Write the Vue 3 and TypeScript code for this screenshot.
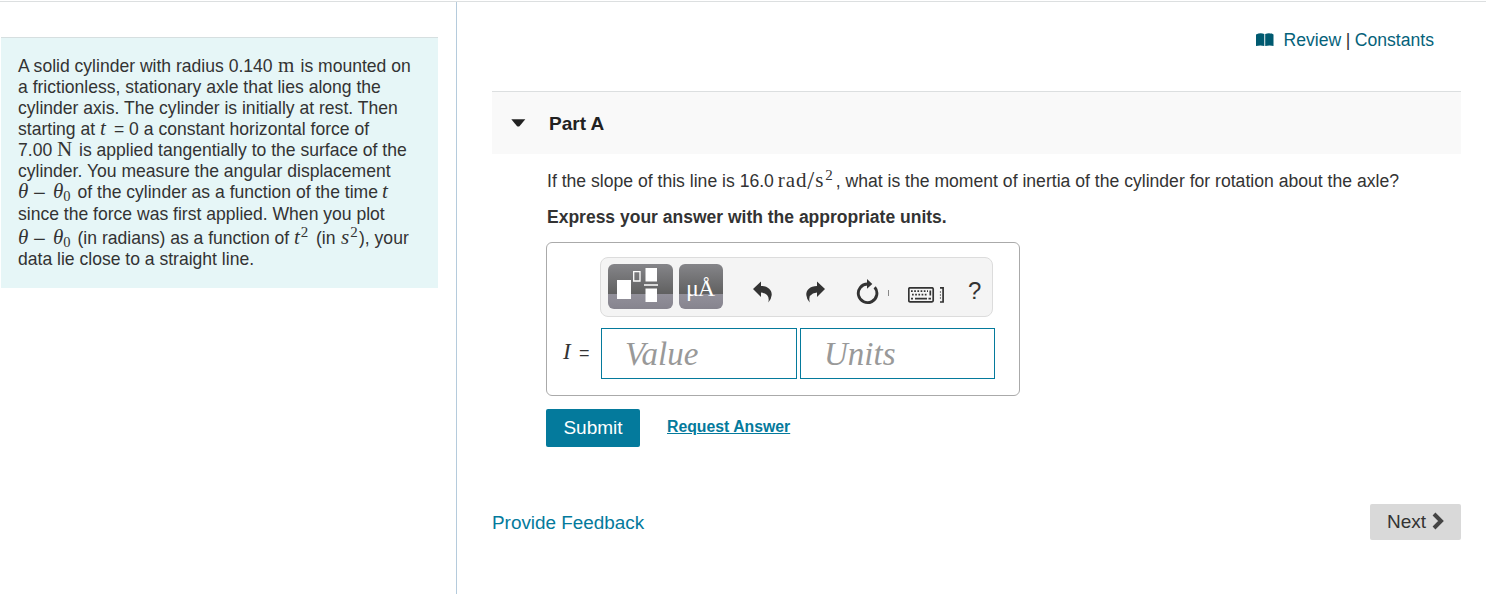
<template>
  <div class="page">
    <aside class="sidebar">
      <div class="problem">
        <div v-for="(line, i) in lines" :key="i" class="line" :class="{ tall: i === 7, taller: i === 8 }">
          <span v-for="(seg, j) in line" :key="j" :class="seg.kind" :style="seg.width ? { width: seg.width + 'px' } : {}">{{ seg.text }}<sup v-if="seg.sup">{{ seg.sup }}</sup><sub v-if="seg.sub">{{ seg.sub }}</sub></span>
        </div>
      </div>
    </aside>

    <main class="content">
      <nav class="resources">
        <svg class="book" width="18" height="14" viewBox="0 0 18 14">
          <path d="M0 1.4Q4.5-.6 8.3 1V13Q4.5 11.8 0 13ZM9.2 1Q13.5-.6 17.5 1.4V13Q13.5 11.8 9.2 13Z" fill="#005a70" />
        </svg>
        <a class="review" href="#">Review</a>
        <span class="pipe">|</span>
        <a class="constants" href="#">Constants</a>
      </nav>

      <header class="part-header" @click="open = !open">
        <svg class="caret" width="15" height="8" viewBox="0 0 15 8"><path d="M.3.3H14.3L8.7 6.9Q7.3 8.2 5.9 6.9Z" fill="#222" /></svg>
        <h2>Part A</h2>
      </header>

      <section v-show="open" class="part-body">
        <p class="question"><span class="q-start">If the slope of this line is 16.0 </span><span class="math unit">rad<i class="slash">/</i>s<sup>2</sup></span><span class="q-end">, what is the moment of inertia of the cylinder for rotation about the axle?</span></p>
        <p class="instruction">Express your answer with the appropriate units.</p>

        <div class="answer-box">
          <div class="toolbar">
            <button class="tool templates" title="Templates">
              <svg width="65" height="45" viewBox="0 0 65 45">
                <path d="M9 16h14v19H9zM37.500 4h11.500v13.500H37.500zM37.500 24.500h11.500v13.500H37.500z" fill="#fff" />
                <path d="M36 21h14" stroke="#fff" stroke-width="1.500" />
                <path d="M25.700 7.700h6.300v9.300h-6.300z" fill="none" stroke="#fff" stroke-width="1.300" />
              </svg>
            </button>
            <button class="tool symbols" title="Symbols">μÅ</button>
            <svg class="undo" width="20" height="22" viewBox="0 0 20 22"><path d="M0 8L8 .5V5C15 5 19 9 18.700 14Q18.400 18 15.300 21.500Q17.500 12.500 8 11.500V16Z" fill="#333" /></svg>
            <svg class="redo" width="20" height="22" viewBox="0 0 20 22"><path d="M19 8L11 .5V5C4 5 0 9 .3 14Q.6 18 3.700 21.500Q1.500 12.500 11 11.500V16Z" fill="#333" /></svg>
            <svg class="reset" width="23" height="26" viewBox="0 0 23 26"><path d="M11.500 5A9.300 9.300 0 1 0 18.700 8.300" fill="none" stroke="#333" stroke-width="2.900" /><path d="M11 0L16.300 4.900L11 9.800Z" fill="#333" /></svg>
            <i class="tick"></i>
            <svg class="keyboard" width="37" height="16" viewBox="0 0 37 16">
              <rect x=".8" y=".8" width="24.400" height="14" rx="1.200" fill="none" stroke="#333" stroke-width="1.700" />
              <path d="M3 4.200H20M4 7.700H20" stroke="#333" stroke-width="1.700" stroke-dasharray="1.700 1.500" />
              <path d="M3 11.700H5M7 11.700H19M20.500 11.700H23M22.300 3.400V8.500" stroke="#333" stroke-width="1.700" />
              <path d="M32 .9H35.100V15H32" fill="none" stroke="#333" stroke-width="1.700" />
              <path d="M32.400 4V12.500" stroke="#777" stroke-width="1" stroke-dasharray="2 1" />
            </svg>
            <span class="help">?</span>
          </div>
          <div class="fields">
            <label><i>I</i><span>=</span></label>
            <input v-model="value" placeholder="Value" />
            <input v-model="units" placeholder="Units" />
          </div>
        </div>

        <div class="actions">
          <button class="submit">Submit</button>
          <a class="request" href="#">Request Answer</a>
        </div>
      </section>

      <footer class="footer">
        <a class="feedback" href="#">Provide Feedback</a>
        <button class="next"><span>Next</span>
          <svg width="13" height="18" viewBox="0 0 13 18"><path d="M2 2L9 9L2 16" fill="none" stroke="#444" stroke-width="4" /></svg>
        </button>
      </footer>
    </main>
  </div>
</template>

<script setup lang="ts">
import { ref } from 'vue';

interface Segment {
  text: string;
  kind?: string;
  width?: number;
  sup?: string;
  sub?: string;
}

const open = ref(true);
const value = ref('');
const units = ref('');

const lines: Segment[][] = [
  [{ text: 'A solid cylinder with radius 0.140', width: 260 }, { text: 'm', kind: 'math', width: 22.5 }, { text: 'is mounted on' }],
  [{ text: 'a frictionless, stationary axle that lies along the' }],
  [{ text: 'cylinder axis. The cylinder is initially at rest. Then' }],
  [{ text: 'starting at', width: 82 }, { text: 't', kind: 'math var', width: 14 }, { text: '= 0 a constant horizontal force of' }],
  [{ text: '7.00', width: 39 }, { text: 'N', kind: 'math', width: 22 }, { text: 'is applied tangentially to the surface of the' }],
  [{ text: 'cylinder. You measure the angular displacement' }],
  [
    { text: 'θ', kind: 'math var', width: 14 }, { text: '−', kind: 'math minus', width: 21 }, { text: 'θ', kind: 'math var', width: 24.5, sub: '0' },
    { text: 'of the cylinder as a function of the time', width: 304.5 }, { text: 't', kind: 'math var' },
  ],
  [{ text: 'since the force was first applied. When you plot' }],
  [
    { text: 'θ', kind: 'math var', width: 14 }, { text: '−', kind: 'math minus', width: 21 }, { text: 'θ', kind: 'math var', width: 24.5, sub: '0' },
    { text: '(in radians) as a function of', width: 216.5 }, { text: 't', kind: 'math var', width: 22, sup: '2' },
    { text: '(in', width: 25 }, { text: 's', kind: 'math var', width: 18, sup: '2' }, { text: '), your' },
  ],
  [{ text: 'data lie close to a straight line.' }],
];
</script>

<style>
body {
  background: #fff;
}
</style>

<style scoped>
* {
  box-sizing: border-box;
}

.page {
  display: flex;
  height: 593px;
  margin-top: 1px;
  border-top: 1px solid #dcdfe0;
  font-family: "Liberation Sans", Arial, sans-serif;
  font-size: 17.6px;
  color: #333;
  overflow: hidden;
}

a {
  color: #047a9c;
  text-decoration: none;
}

p,
h2 {
  margin: 0;
}

button {
  font-family: inherit;
  border: 0;
  padding: 0;
}

.sidebar {
  width: 457px;
  flex: none;
  border-right: 1px solid #b5cbdc;
  padding: 35px 18px 0 1px;
}

.problem {
  height: 251px;
  padding: 18px 0 0 17px;
  background: #e6f6f7;
  border-top: 1px solid #d6dfe0;
  font-size: 17.56px;
}

.line {
  display: flex;
  align-items: baseline;
  height: 21px;
  line-height: 21px;
  white-space: pre;
}

.line.tall {
  height: 22px;
  padding-top: 1px;
}

.line.taller {
  height: 24px;
  padding-top: 3px;
}

.line > span {
  flex: none;
}

.math,
.line > .math {
  font-family: "Liberation Serif", "Times New Roman", serif;
  font-size: 21px;
  line-height: 12px;
}

.var {
  font-style: italic;
}

.line > .minus {
  align-self: center;
  padding: 3px 0 0 1px;
  font-size: 23px;
  line-height: 14px;
}

sup,
sub {
  font-size: 15px;
  font-style: normal;
  line-height: 0;
}

sup {
  vertical-align: 7px;
  margin-left: 1px;
}

sub {
  font-size: 14.5px;
  vertical-align: -3px;
}

.content {
  flex: 1;
  padding: 0 25px 0 35px;
}

.resources {
  display: flex;
  align-items: center;
  height: 76px;
  margin-bottom: 13px;
  padding-right: 27px;
  justify-content: flex-end;
}

.resources a {
  color: #05627a;
}

.book {
  margin-right: 10px;
}

.pipe {
  margin: 0 4.5px;
}

.part-header {
  display: flex;
  align-items: center;
  height: 63px;
  padding-left: 18.5px;
  border-top: 1px solid #dcdfe0;
  background: #f9f9f9;
}

.part-header h2 {
  margin: 1px 0 0 23.5px;
  font-size: 19px;
  color: #222;
}

.part-body {
  padding-left: 54px;
}

.question {
  height: 54px;
  line-height: 54px;
  padding-left: 1px;
  white-space: pre;
}

.q-start {
  margin-right: -1px;
}

.unit {
  margin-right: 2px;
  letter-spacing: 0.9px;
}

.slash {
  font-size: 25px;
  font-style: normal;
  vertical-align: -2px;
  line-height: 0;
}

.instruction {
  height: 34px;
  line-height: 18px;
  padding-left: 1px;
  font-size: 17.5px;
  font-weight: bold;
}

.answer-box {
  width: 474px;
  height: 154px;
  padding: 14px 24px 0 15px;
  border: 1px solid #aaa;
  border-radius: 6px;
}

.toolbar {
  display: flex;
  width: 393px;
  height: 60px;
  margin-left: 38px;
  padding: 6px 7px;
  background: #f4f4f4;
  border: 1px solid #dcdcdc;
  border-radius: 8px;
}

.tool {
  height: 45px;
  border-radius: 6px;
  color: #fff;
  background: linear-gradient(#858589 0, #606060 67%, #92909a 67%, #86848e 100%);
}

.templates {
  width: 65px;
}

.templates svg {
  display: block;
}

.symbols {
  width: 44px;
  margin-left: 6px;
  padding: 3px 2px 0 0;
  font: 24px "Liberation Serif", serif;
  letter-spacing: -1px;
}

.undo {
  margin: 17px 0 0 30px;
}

.redo {
  margin: 17px 0 0 33px;
}

.reset {
  margin: 15px 0 0 30px;
}

.tick {
  width: 1px;
  height: 6px;
  margin: 26px 0 0 9px;
  background: #888;
}

.keyboard {
  margin: 23px 0 0 19px;
}

.help {
  margin: 13px 0 0 23px;
  font-size: 24px;
  line-height: 28px;
}

.fields {
  display: flex;
  align-items: center;
  margin-top: 11px;
}

.fields label {
  display: flex;
  align-items: baseline;
  width: 39px;
  padding: 0 0 4px 1px;
  font-size: 18px;
}

.fields label i {
  width: 16px;
  font: italic 23px "Liberation Serif", serif;
}

.fields input {
  width: 196px;
  height: 51px;
  padding: 1px 23px 0;
  border: 1px solid #047a9c;
  border-radius: 0;
  font: italic 33px "Liberation Serif", serif;
  outline: none;
}

.fields input + input {
  width: 195px;
  margin-left: 3px;
}

.fields input::placeholder {
  color: #999;
  opacity: 1;
}

.actions {
  display: flex;
  align-items: center;
  margin-top: 13px;
}

.submit {
  width: 94px;
  height: 38px;
  border-radius: 2px;
  background: #047a9c;
  color: #fff;
  font-size: 19px;
}

.request {
  margin: -3px 0 0 27px;
  font-size: 15.8px;
  font-weight: bold;
  text-decoration: underline;
}

.footer {
  display: flex;
  align-items: center;
  justify-content: space-between;
  margin-top: 57px;
}

.feedback {
  padding-top: 2px;
  font-size: 18.9px;
}

.next {
  display: flex;
  align-items: center;
  width: 91px;
  height: 36px;
  padding-left: 17px;
  border-radius: 2px;
  background: #d9d9d9;
  color: #333;
  font-size: 19px;
}

.next svg {
  margin: -2px 0 0 6px;
}
</style>
